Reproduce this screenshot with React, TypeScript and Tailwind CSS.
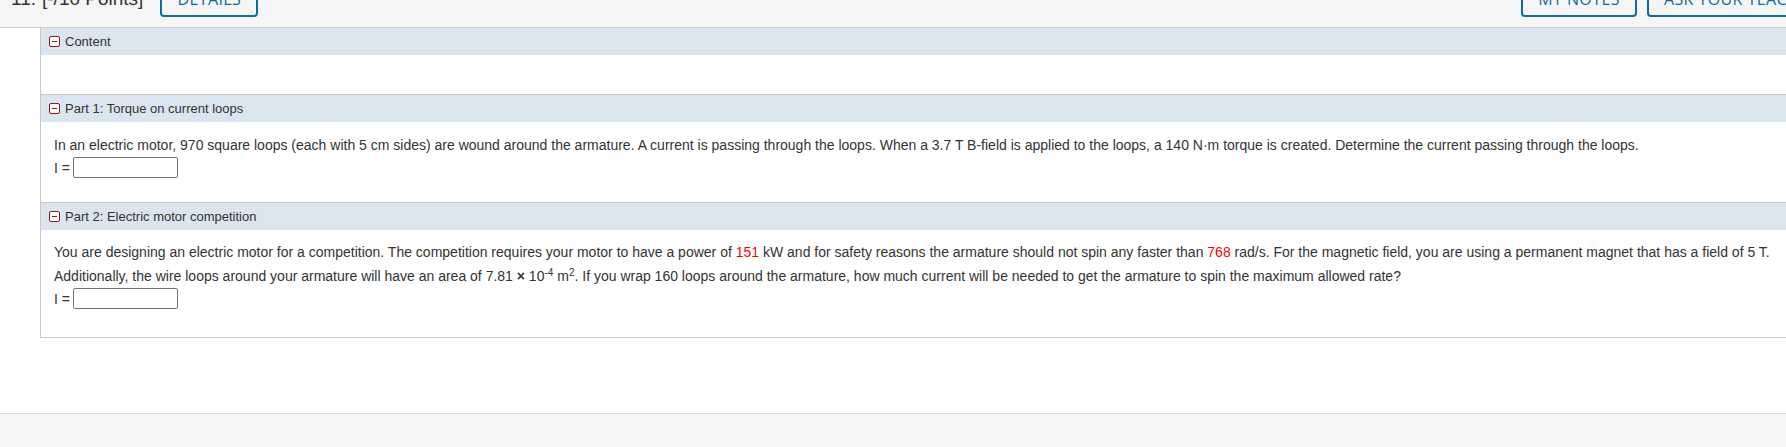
import React from "react";

function MinusIcon() {
  return (
    <span className="inline-flex items-center justify-center w-[11px] h-[11px] border border-[#8b1a1a] rounded-[2px] bg-white shrink-0">
      <span className="block w-[5px] h-[1px] bg-[#8b1a1a]" />
    </span>
  );
}

function SectionHeader({ title }: { title: string }) {
  return (
    <div className="h-[27px] bg-[#dae5ef] flex items-center gap-[5px] pl-[8px] text-[13px] text-[#333]">
      <MinusIcon />
      <span>{title}</span>
    </div>
  );
}

function Answer() {
  return (
    <div className="flex items-center h-[21px]">
      <span className="mr-[3px]">I =</span>
      <input
        type="text"
        className="w-[105px] h-[21px] border border-[#767676] rounded-[2px] bg-white outline-none"
      />
    </div>
  );
}

export default function App() {
  return (
    <div
      className="w-[1786px] h-[447px] overflow-hidden bg-white flex flex-col text-[#333]"
      style={{ fontFamily: '"Liberation Sans", Arial, sans-serif' }}
    >
      {/* question bar, scrolled so only its lower part shows */}
      <div className="h-[28px] shrink-0 bg-[#f5f5f5] border-b border-[#cfcfcf] flex items-end overflow-hidden">
        <div className="flex items-center h-9 mb-[10px] pl-[11px] shrink-0">
          <span className="text-[19px] text-[#333]">11.</span>
          <span className="text-[19px] text-[#333] ml-[6px]">[-/10 Points]</span>
          <button
            className="ml-[17px] h-9 px-[15px] border-2 border-[#0d6aa3] rounded-[4px] text-[#0d6aa3] text-[16px] tracking-wide"
            style={{ fontFamily: '"Open Sans", sans-serif' }}
          >
            DETAILS
          </button>
          <button
            className="ml-[1263px] h-9 px-[15px] border-2 border-[#0d6aa3] rounded-[4px] text-[#0d6aa3] text-[16px] tracking-wide"
            style={{ fontFamily: '"Open Sans", sans-serif' }}
          >
            MY NOTES
          </button>
          <button
            className="ml-[10px] h-9 px-[15px] border-2 border-[#0d6aa3] rounded-[4px] text-[#0d6aa3] text-[16px] tracking-wide whitespace-nowrap"
            style={{ fontFamily: '"Open Sans", sans-serif' }}
          >
            ASK YOUR TEACHER
          </button>
        </div>
      </div>

      <div className="ml-[40px] border-l border-b border-[#c8c8c8]">
        <SectionHeader title="Content" />
        <div className="h-[39px] bg-white" />

        <div className="border-t border-[#c8c8c8]">
          <SectionHeader title="Part 1: Torque on current loops" />
          <div className="pl-[13px] pt-[11px] pb-[24px] text-[14px] leading-[24px]">
            <p>
              In an electric motor, 970 square loops (each with 5 cm sides) are wound around the armature. A current is
              passing through the loops. When a 3.7 T B-field is applied to the loops, a 140 N·m torque is created.
              Determine the current passing through the loops.
            </p>
            <Answer />
          </div>
        </div>

        <div className="border-t border-[#c8c8c8]">
          <SectionHeader title="Part 2: Electric motor competition" />
          <div className="pl-[13px] pt-[10px] pb-[28px] text-[14px] leading-[24px]">
            <p>
              You are designing an electric motor for a competition. The competition requires your motor to have a power
              of <span className="text-[#f00]">151</span> kW and for safety reasons the armature should not spin any
              faster than <span className="text-[#f00]">768</span> rad/s. For the magnetic field, you are using a
              permanent magnet that has a field of 5 T.
              <br />
              Additionally, the wire loops around your armature will have an area of 7.81{" "}
              <span className="font-bold">×</span> 10
              <sup className="text-[10px] leading-none">-4</sup> m
              <sup className="text-[10px] leading-none">2</sup>. If you wrap 160 loops around the armature, how much
              current will be needed to get the armature to spin the maximum allowed rate?
            </p>
            <Answer />
          </div>
        </div>
      </div>

      <div className="flex-1" />
      <div className="h-[34px] shrink-0 bg-[#f5f5f5] border-t border-[#dcdcdc]" />
    </div>
  );
}
